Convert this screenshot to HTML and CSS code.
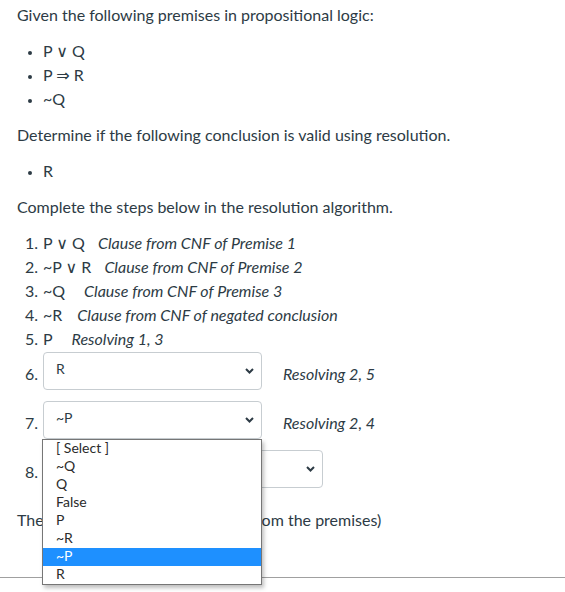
FILE: index.html
```html
<!DOCTYPE html>
<html lang="en">
<head>
<meta charset="utf-8">
<title>Resolution question</title>
<link rel="stylesheet" href="styles.css">
</head>
<body>
<div class="question">
  <p>Given the following premises in propositional logic:</p>
  <ul class="bullets">
    <li>P ∨ Q</li>
    <li>P ⇒ R</li>
    <li>~Q</li>
  </ul>
  <p>Determine if the following conclusion is valid using resolution.</p>
  <ul class="bullets">
    <li>R</li>
  </ul>
  <p>Complete the steps below in the resolution algorithm.</p>
  <ol class="steps">
    <li class="step"><span class="num">1.</span><span class="clause">P ∨ Q</span><em class="why why-or">Clause from CNF of Premise 1</em></li>
    <li class="step"><span class="num">2.</span><span class="clause">~P ∨ R</span><em class="why why-or">Clause from CNF of Premise 2</em></li>
    <li class="step"><span class="num">3.</span><span class="clause">~Q</span><em class="why why-wide">Clause from CNF of Premise 3</em></li>
    <li class="step"><span class="num">4.</span><span class="clause">~R</span><em class="why">Clause from CNF of negated conclusion</em></li>
    <li class="step"><span class="num">5.</span><span class="clause">P</span><em class="why why-wide">Resolving 1, 3</em></li>
    <li class="step step-select">
      <span class="num num-sel">6.</span>
      <div class="sel sel-narrow"><span class="sel-value">R</span><svg class="chev" width="9" height="6" viewBox="0 0 9 6"><polyline points="1,1 4.5,4.5 8,1" fill="none" stroke="#2d3b45" stroke-width="2"/></svg></div>
      <em class="why why-sel">Resolving 2, 5</em>
    </li>
    <li class="step step-select">
      <span class="num num-sel">7.</span>
      <div class="sel-wrap">
        <div class="sel sel-narrow"><span class="sel-value">~P</span><svg class="chev" width="9" height="6" viewBox="0 0 9 6"><polyline points="1,1 4.5,4.5 8,1" fill="none" stroke="#2d3b45" stroke-width="2"/></svg></div>
        <ul class="menu">
          <li class="opt">[ Select ]</li>
          <li class="opt">~Q</li>
          <li class="opt">Q</li>
          <li class="opt">False</li>
          <li class="opt">P</li>
          <li class="opt">~R</li>
          <li class="opt opt-active">~P</li>
          <li class="opt">R</li>
        </ul>
      </div>
      <em class="why why-sel">Resolving 2, 4</em>
    </li>
    <li class="step step-select">
      <span class="num num-sel">8.</span>
      <div class="sel sel-wide"><span class="sel-value"></span><svg class="chev" width="9" height="6" viewBox="0 0 9 6"><polyline points="1,1 4.5,4.5 8,1" fill="none" stroke="#2d3b45" stroke-width="2"/></svg></div>
    </li>
  </ol>
  <p>The conclusion is valid (R follows fr<span>om the premises)</span></p>
</div>
<hr class="divider">
</body>
</html>
```
FILE: styles.css
```css
html, body {
  margin: 0;
  padding: 0;
  background: #ffffff;
}

body {
  font-family: "Lato", "DejaVu Sans", sans-serif;
  font-size: 16px;
  line-height: 24px;
  color: #2d3b45;
}

.question {
  padding: 3px 17px 0 17px;
}

.question p {
  margin: 0 0 12px 0;
}

.bullets {
  margin: 0 0 12px 0;
  padding: 0 0 0 26px;
  list-style: disc;
}

.bullets li::marker {
  font-size: 13px;
}

.steps {
  margin: 0 0 20px 0;
  padding: 0 0 0 8px;
  list-style: none;
}

.step {
  display: flex;
  align-items: flex-start;
}

.num {
  width: 18px;
  flex: none;
}

.why {
  font-style: italic;
  margin-left: 15px;
}

.why-or {
  margin-left: 13px;
}

.why-wide {
  margin-left: 19px;
}

.step-select {
  padding-top: 1px;
  margin-bottom: 10px;
}

.num-sel {
  margin-top: 10px;
}

.sel-wrap {
  position: relative;
}

.sel {
  box-sizing: border-box;
  height: 38px;
  border: 1px solid #c7cdd1;
  border-radius: 4px;
  background: #ffffff;
  display: flex;
  align-items: flex-start;
  justify-content: space-between;
  padding: 6px 7px 0 12px;
  font-size: 14px;
  line-height: 20px;
}

.sel-narrow {
  width: 219px;
}

.sel-wide {
  width: 280px;
}

.chev {
  margin-top: 9px;
  flex: none;
}

.why-sel {
  margin-left: 21px;
  margin-top: 10px;
}

.menu {
  position: absolute;
  left: -1px;
  top: 38px;
  width: 220px;
  box-sizing: border-box;
  margin: 0;
  padding: 0;
  list-style: none;
  background: #ffffff;
  border: 1px solid #767676;
  box-shadow: 2px 3px 4px rgba(0, 0, 0, 0.25);
  font-size: 14px;
  line-height: 15px;
  color: #2b2b2b;
  z-index: 5;
}

.opt {
  padding: 0 0 3px 13px;
  height: 15px;
}

.opt-active {
  background: #1e90ff;
  color: #ffffff;
}

.divider {
  margin: 45px 0 24px 0;
  border: 0;
  border-top: 1px solid #a0a0a0;
  height: 0;
}
```
